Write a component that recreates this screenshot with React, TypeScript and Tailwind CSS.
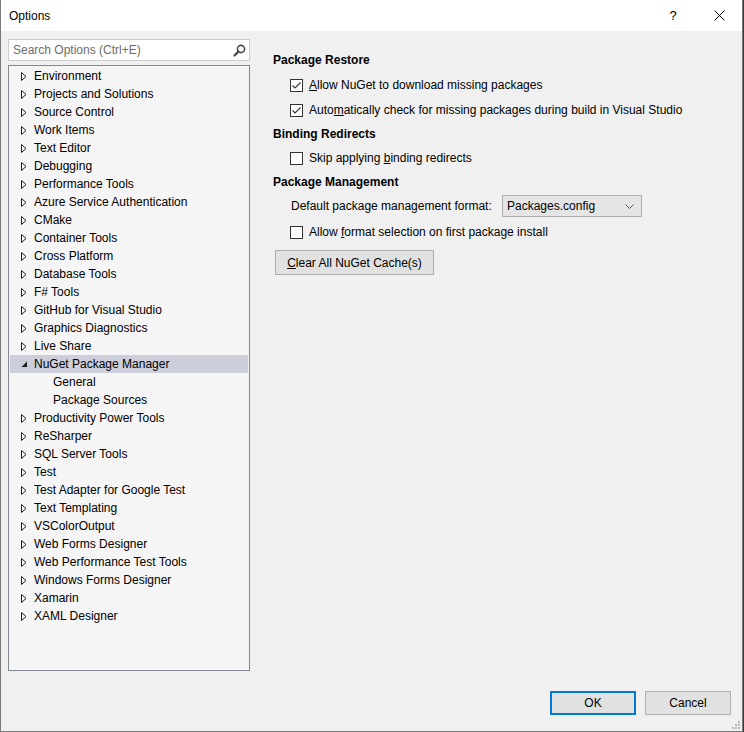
import React from "react";

const TREE: { label: string; kind: "closed" | "open" | "child"; selected?: boolean }[] = [
  { label: "Environment", kind: "closed" },
  { label: "Projects and Solutions", kind: "closed" },
  { label: "Source Control", kind: "closed" },
  { label: "Work Items", kind: "closed" },
  { label: "Text Editor", kind: "closed" },
  { label: "Debugging", kind: "closed" },
  { label: "Performance Tools", kind: "closed" },
  { label: "Azure Service Authentication", kind: "closed" },
  { label: "CMake", kind: "closed" },
  { label: "Container Tools", kind: "closed" },
  { label: "Cross Platform", kind: "closed" },
  { label: "Database Tools", kind: "closed" },
  { label: "F# Tools", kind: "closed" },
  { label: "GitHub for Visual Studio", kind: "closed" },
  { label: "Graphics Diagnostics", kind: "closed" },
  { label: "Live Share", kind: "closed" },
  { label: "NuGet Package Manager", kind: "open", selected: true },
  { label: "General", kind: "child" },
  { label: "Package Sources", kind: "child" },
  { label: "Productivity Power Tools", kind: "closed" },
  { label: "ReSharper", kind: "closed" },
  { label: "SQL Server Tools", kind: "closed" },
  { label: "Test", kind: "closed" },
  { label: "Test Adapter for Google Test", kind: "closed" },
  { label: "Text Templating", kind: "closed" },
  { label: "VSColorOutput", kind: "closed" },
  { label: "Web Forms Designer", kind: "closed" },
  { label: "Web Performance Test Tools", kind: "closed" },
  { label: "Windows Forms Designer", kind: "closed" },
  { label: "Xamarin", kind: "closed" },
  { label: "XAML Designer", kind: "closed" },
];

function Checkbox({ checked }: { checked?: boolean }) {
  return (
    <span className="w-[13px] h-[13px] border border-[#333333] bg-white flex items-center justify-center shrink-0">
      {checked && (
        <svg width="11" height="11" viewBox="0 0 11 11">
          <path d="M1.5 5.5 L4 8 L9.5 2.5" fill="none" stroke="#333333" strokeWidth="1.1" />
        </svg>
      )}
    </span>
  );
}

function Expander({ open }: { open: boolean }) {
  if (open) {
    return (
      <svg width="7" height="7" viewBox="0 0 7 7" className="shrink-0">
        <path d="M6 0.5 L6 6 L0.5 6 Z" fill="#1e1e1e" />
      </svg>
    );
  }
  return (
    <svg width="6" height="9" viewBox="0 0 6 9" className="shrink-0">
      <path d="M0.5 0.5 L5 4.5 L0.5 8.5 Z" fill="none" stroke="#1e1e1e" strokeWidth="1" />
    </svg>
  );
}

export default function App() {
  return (
    <div className="w-[744px] h-[732px] bg-[#3a3a3a] font-['Liberation_Sans',Arial,sans-serif] text-[12px] text-black">
      <div className="w-[743px] h-[732px] flex flex-col bg-[#f0f0f0] border-l border-r border-b border-[#7a7a7a]">
        {/* Title bar */}
        <div className="h-[31px] bg-white flex items-center shrink-0">
          <span className="pl-[8px] flex-1 text-[12px] text-black">Options</span>
          <span className="w-[46px] text-center text-[13px] text-black">?</span>
          <span className="w-[46px] h-[31px] flex items-center justify-center">
            <svg width="11" height="11" viewBox="0 0 11 11">
              <path d="M0.5 0.5 L10.5 10.5 M10.5 0.5 L0.5 10.5" stroke="#000" strokeWidth="1" />
            </svg>
          </span>
        </div>

        {/* Body */}
        <div className="flex flex-1 min-h-0">
          {/* Left column */}
          <div className="w-[249px] pl-[7px] pt-[8px] flex flex-col shrink-0">
            <div className="h-[22px] bg-white border border-[#cccccc] flex items-center pl-[4px] pr-[3px]">
              <span className="flex-1 text-[#6d6d6d]">Search Options (Ctrl+E)</span>
              <svg width="13" height="13" viewBox="0 0 13 13">
                <circle cx="8" cy="5" r="3.6" fill="none" stroke="#4a4a4a" strokeWidth="1.6" />
                <path d="M5.4 7.6 L1.5 11.5" stroke="#4a4a4a" strokeWidth="2.2" strokeLinecap="round" />
              </svg>
            </div>
            <div className="mt-[4px] h-[606px] bg-[#f5f5f5] border border-[#828790] pt-px px-px">
              {TREE.map((item) => (
                <div
                  key={item.label}
                  className={`h-[18px] flex items-center ${item.selected ? "bg-[#cccedb]" : ""}`}
                >
                  {item.kind === "child" ? (
                    <span className="pl-[43px]">{item.label}</span>
                  ) : (
                    <>
                      <span className="w-[24px] pl-[11px] flex items-center">
                        <Expander open={item.kind === "open"} />
                      </span>
                      <span>{item.label}</span>
                    </>
                  )}
                </div>
              ))}
            </div>
          </div>

          {/* Right panel */}
          <div className="flex-1 pl-[23px] pt-[17px] flex flex-col">
            <div className="h-[24px] flex items-center font-bold">Package Restore</div>
            <div className="h-[24px] mt-px flex items-center gap-[6px] pl-[17px]">
              <Checkbox checked />
              <span><u>A</u>llow NuGet to download missing packages</span>
            </div>
            <div className="h-[24px] mt-px flex items-center gap-[6px] pl-[17px]">
              <Checkbox checked />
              <span>Auto<u>m</u>atically check for missing packages during build in Visual Studio</span>
            </div>
            <div className="h-[24px] flex items-center font-bold">Binding Redirects</div>
            <div className="h-[24px] flex items-center gap-[6px] pl-[17px]">
              <Checkbox />
              <span>Skip applying <u>b</u>inding redirects</span>
            </div>
            <div className="h-[24px] flex items-center font-bold">Package Management</div>
            <div className="h-[24px] flex items-center pl-[18px]">
              <span className="w-[211px]">Default package management format:</span>
              <div className="w-[140px] h-[22px] bg-[#e5e5e5] border border-[#adadad] flex items-center pl-[4px] pr-[7px]">
                <span className="flex-1">Packages.config</span>
                <svg width="9" height="5" viewBox="0 0 9 5">
                  <path d="M0.5 0.5 L4.5 4.5 L8.5 0.5" fill="none" stroke="#5a5a5a" strokeWidth="1" />
                </svg>
              </div>
            </div>
            <div className="h-[24px] mt-[2px] flex items-center gap-[6px] pl-[17px]">
              <Checkbox />
              <span>Allow <u>f</u>ormat selection on first package install</span>
            </div>
            <div className="mt-[6px] pl-[2px]">
              <div className="w-[159px] h-[25px] bg-[#e1e1e1] border border-[#adadad] flex items-center justify-center">
                <span><u>C</u>lear All NuGet Cache(s)</span>
              </div>
            </div>
          </div>
        </div>

        {/* Footer */}
        <div className="h-[40px] shrink-0 flex items-start justify-end gap-[9px] pr-[11px] relative">
          <div className="w-[86px] h-[24px] bg-[#e1e1e1] border-2 border-[#0078d7] flex items-center justify-center">OK</div>
          <div className="w-[86px] h-[24px] bg-[#e1e1e1] border border-[#adadad] flex items-center justify-center">Cancel</div>
          <svg width="8" height="8" viewBox="0 0 8 8" className="absolute right-[2px] bottom-[2px]">
            <rect x="6" y="0" width="2" height="2" fill="#b8b8b8" />
            <rect x="3" y="3" width="2" height="2" fill="#b8b8b8" />
            <rect x="6" y="3" width="2" height="2" fill="#b8b8b8" />
            <rect x="0" y="6" width="2" height="2" fill="#b8b8b8" />
            <rect x="3" y="6" width="2" height="2" fill="#b8b8b8" />
            <rect x="6" y="6" width="2" height="2" fill="#b8b8b8" />
          </svg>
        </div>
      </div>
    </div>
  );
}
